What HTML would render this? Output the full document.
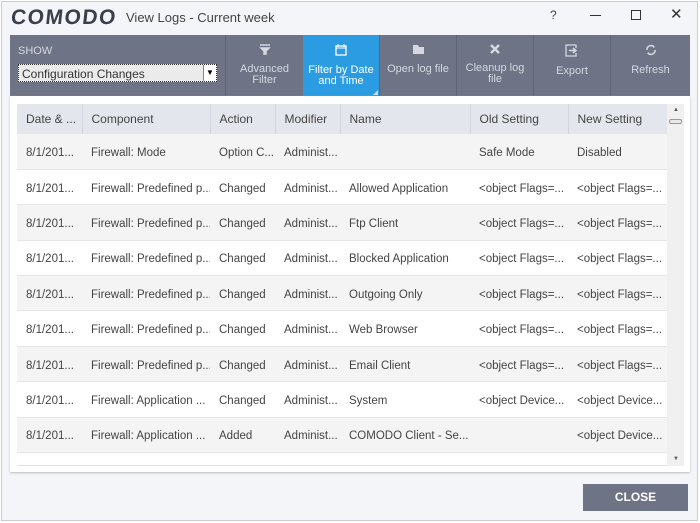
<!DOCTYPE html>
<html><head><meta charset="utf-8"><style>
*{margin:0;padding:0;box-sizing:border-box}
body{width:700px;height:523px;background:#fff;font-family:"Liberation Sans",sans-serif;position:relative;overflow:hidden}
.win{position:absolute;left:1px;top:1px;width:697px;height:520px;background:#f3f5f8;border:1px solid #c9ccd2}
.abs{position:absolute}
.logo{left:11px;top:6px;font-size:21px;font-weight:bold;color:#3b3f4c;letter-spacing:1.5px;transform:skewX(-6deg)}
.title{left:126px;top:10px;font-size:13px;color:#444}
.tb{left:10px;top:35px;width:680px;height:61px;background:#6e7385}
.btn{position:absolute;top:0;height:61px;border-left:1px solid #5f6476;color:#d5d8e0;font-size:11px;text-align:center;line-height:11px}
.btn svg{display:block;margin:9px auto 9px}
.panel{left:10px;top:96px;width:680px;height:376px;background:#fff;box-shadow:0 1px 2px #bbb}
table{border-collapse:collapse;position:absolute;left:17px;top:104px;width:650px;font-size:11.5px;color:#444;table-layout:fixed}
td,th{white-space:nowrap;overflow:hidden;padding-left:9px;text-align:left;font-weight:normal}
th{height:30px;background:#e4e6ed;border-right:1px solid #d2d5de;color:#444;font-size:12px}
td{height:35.4px;border-bottom:1px solid #e6e6e6;padding-top:3px}
tr.g td{background:#f4f4f4}
</style></head><body>
<div class="win"></div>
<div class="abs logo">COMODO</div>
<div class="abs title">View Logs - Current week</div>
<div class="abs" style="left:550px;top:8px;font-size:12px;color:#444">?</div>
<div class="abs" style="left:590px;top:15px;width:11px;height:1px;background:#333"></div>
<div class="abs" style="left:631px;top:10px;width:10px;height:10px;border:1px solid #333"></div>
<div class="abs" style="left:670px;top:5px;font-size:15px;color:#333">✕</div>
<div class="abs tb">
 <div class="abs" style="left:8px;top:10px;font-size:11px;color:#d5d8e0">SHOW</div>
 <div class="abs" style="left:8px;top:29px;width:199px;height:18px;background:#ebebeb;border:1px dotted #333;font-size:12px;color:#333;padding:2px 3px">Configuration Changes</div>
 <div class="abs" style="left:193px;top:30px;width:13px;height:16px;background:#fff;border-left:1px solid #888;font-size:8px;text-align:center;line-height:16px;color:#000">▼</div>
 <div class="btn" style="left:215px;width:78px"><svg width="12" height="11"><path d="M1 1h10M2 4h8l-3 3v3h-2v-3z" stroke="#d5d8e0" stroke-width="1.5" fill="#d5d8e0"/></svg>Advanced<br>Filter</div>
 <div class="btn" style="left:293px;width:76px;background:#2b9ce2;color:#fff;border:none"><svg width="12" height="12"><rect x="1" y="2" width="10" height="9" fill="none" stroke="#fff" stroke-width="1.3"/><path d="M3 0v3M9 0v3M1 4h10" stroke="#fff"/></svg>Filter by Date<br>and Time<div class="abs" style="right:1px;bottom:1px;width:0;height:0;border-left:5px solid transparent;border-bottom:5px solid #bfe0f5"></div></div>
 <div class="btn" style="left:369px;width:77px"><svg width="13" height="11"><path d="M1 1h5l1 2h5v7H1z" fill="#d5d8e0"/></svg><div style="margin-top:5px">Open log file</div></div>
 <div class="btn" style="left:446px;width:77px"><svg width="10" height="10"><path d="M1 1l8 8M9 1l-8 8" stroke="#d5d8e0" stroke-width="2.5"/></svg>Cleanup log<br>file</div>
 <div class="btn" style="left:523px;width:77px"><svg width="14" height="13"><path d="M11 4V1H1v11h10V9" stroke="#d5d8e0" fill="none" stroke-width="1.3"/><path d="M4 6.5h6M8 4l3 2.5L8 9" stroke="#d5d8e0" fill="none" stroke-width="1.5"/></svg><div style="margin-top:3px">Export</div></div>
 <div class="btn" style="left:600px;width:80px"><svg width="12" height="12"><path d="M2 6a4 4 0 0 1 7-3M10 6a4 4 0 0 1-7 3" stroke="#d5d8e0" fill="none" stroke-width="1.6"/><path d="M8 1l2 2-2 1zM4 11l-2-2 2-1z" fill="#d5d8e0"/></svg><div style="margin-top:4px">Refresh</div></div>
</div>
<div class="abs panel"></div>
<table>
<colgroup><col style="width:65px"><col style="width:128px"><col style="width:65px"><col style="width:65px"><col style="width:130px"><col style="width:98px"><col style="width:99px"></colgroup>
<tr><th>Date &amp; ...</th><th>Component</th><th>Action</th><th>Modifier</th><th>Name</th><th>Old Setting</th><th>New Setting</th></tr>
<tr class="g"><td>8/1/201...</td><td>Firewall: Mode</td><td>Option C...</td><td>Administ...</td><td></td><td>Safe Mode</td><td>Disabled</td></tr>
<tr><td>8/1/201...</td><td>Firewall: Predefined p...</td><td>Changed</td><td>Administ...</td><td>Allowed Application</td><td>&lt;object Flags=...</td><td>&lt;object Flags=...</td></tr>
<tr class="g"><td>8/1/201...</td><td>Firewall: Predefined p...</td><td>Changed</td><td>Administ...</td><td>Ftp Client</td><td>&lt;object Flags=...</td><td>&lt;object Flags=...</td></tr>
<tr><td>8/1/201...</td><td>Firewall: Predefined p...</td><td>Changed</td><td>Administ...</td><td>Blocked Application</td><td>&lt;object Flags=...</td><td>&lt;object Flags=...</td></tr>
<tr class="g"><td>8/1/201...</td><td>Firewall: Predefined p...</td><td>Changed</td><td>Administ...</td><td>Outgoing Only</td><td>&lt;object Flags=...</td><td>&lt;object Flags=...</td></tr>
<tr><td>8/1/201...</td><td>Firewall: Predefined p...</td><td>Changed</td><td>Administ...</td><td>Web Browser</td><td>&lt;object Flags=...</td><td>&lt;object Flags=...</td></tr>
<tr class="g"><td>8/1/201...</td><td>Firewall: Predefined p...</td><td>Changed</td><td>Administ...</td><td>Email Client</td><td>&lt;object Flags=...</td><td>&lt;object Flags=...</td></tr>
<tr><td>8/1/201...</td><td>Firewall: Application ...</td><td>Changed</td><td>Administ...</td><td>System</td><td>&lt;object Device...</td><td>&lt;object Device...</td></tr>
<tr class="g"><td>8/1/201...</td><td>Firewall: Application ...</td><td>Added</td><td>Administ...</td><td>COMODO Client - Se...</td><td></td><td>&lt;object Device...</td></tr>
</table>
<div class="abs" style="left:17px;top:465px;width:650px;height:1px;background:#e0e0e0"></div>
<div class="abs" style="left:667px;top:104px;width:17px;height:362px;background:#f0f0f0"></div>
<div class="abs" style="left:673px;top:107px;font-size:6px;color:#555">▲</div>
<div class="abs" style="left:669px;top:119px;width:13px;height:5px;border:1px solid #999;border-radius:2px;background:#e8e8e8"></div>
<div class="abs" style="left:673px;top:456px;font-size:6px;color:#555">▼</div>
<div class="abs" style="left:583px;top:484px;width:105px;height:27px;background:#6e7385;color:#fff;font-size:12px;font-weight:bold;text-align:center;line-height:27px">CLOSE</div>
</body></html>
